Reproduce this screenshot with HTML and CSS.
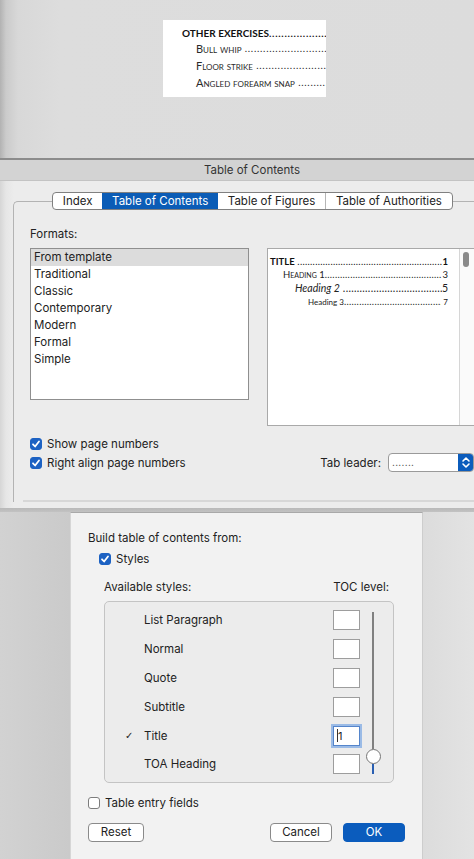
FILE: index.html
```html
<!DOCTYPE html>
<html>
<head>
<meta charset="utf-8">
<link rel="stylesheet" href="styles.css">
</head>
<body>
<section class="doc">
  <div class="card">
    <div class="cl top"><span class="nm-b">OTHER EXERCISES</span><span class="dots">......................................................</span></div>
    <div class="cl"><span class="nm">Bull whip</span><span class="dots">&nbsp;......................................................</span></div>
    <div class="cl"><span class="nm">Floor strike</span><span class="dots">&nbsp;......................................................</span></div>
    <div class="cl"><span class="nm">Angled forearm snap</span><span class="dots">&nbsp;......................................................</span></div>
  </div>
</section>

<section class="dlg">
  <div class="titlebar">Table of Contents</div>
  <div class="dbody">
    <div class="group">
      <div class="tabs">
        <span class="tab">Index</span>
        <span class="tab sel">Table of Contents</span>
        <span class="tab">Table of Figures</span>
        <span class="tab">Table of Authorities</span>
      </div>
      <div class="gcontent">
        <div class="lbl formats">Formats:</div>
        <div class="fmt-row">
          <ul class="list">
            <li class="sel">From template</li>
            <li>Traditional</li>
            <li>Classic</li>
            <li>Contemporary</li>
            <li>Modern</li>
            <li>Formal</li>
            <li>Simple</li>
          </ul>
          <div class="preview">
            <div class="pv">
              <div class="pl p0"><span>TITLE</span><span class="pd">&nbsp;....................................................................</span><span>1</span></div>
              <div class="pl p1"><span class="sc">Heading 1</span><span class="pd">....................................................................</span><span>3</span></div>
              <div class="pl p2"><span>Heading 2</span><span class="pd">&nbsp;....................................................................</span><span>5</span></div>
              <div class="pl p3"><span>Heading 3</span><span class="pd">....................................................................</span><span>&nbsp;7</span></div>
            </div>
            <div class="scroll"><div class="thumb"></div></div>
          </div>
        </div>
        <div class="opt opt1">
          <span class="cb on"><svg viewBox="0 0 12 12" width="12" height="12"><path d="M3 6.3 L5.1 8.5 L9 3.5" fill="none" stroke="#fff" stroke-width="1.8" stroke-linecap="round" stroke-linejoin="round"/></svg></span>
          <span>Show page numbers</span>
        </div>
        <div class="opt opt2">
          <div class="optl">
            <span class="cb on"><svg viewBox="0 0 12 12" width="12" height="12"><path d="M3 6.3 L5.1 8.5 L9 3.5" fill="none" stroke="#fff" stroke-width="1.8" stroke-linecap="round" stroke-linejoin="round"/></svg></span>
            <span>Right align page numbers</span>
          </div>
          <div class="leader">
            <span>Tab leader:</span>
            <div class="select">
              <span class="sv">.......</span>
              <span class="step"><svg viewBox="0 0 16 19" width="16" height="19"><path d="M5 8 L8 5 L11 8 M5 11 L8 14 L11 11" fill="none" stroke="#fff" stroke-width="1.6" stroke-linecap="round" stroke-linejoin="round"/></svg></span>
            </div>
          </div>
        </div>
      </div>
      <div class="sep"></div>
    </div>
  </div>
</section>

<section class="lower">
  <div class="panel">
    <div class="lbl build">Build table of contents from:</div>
    <div class="opt styles-cb">
      <span class="cb on"><svg viewBox="0 0 12 12" width="12" height="12"><path d="M3 6.3 L5.1 8.5 L9 3.5" fill="none" stroke="#fff" stroke-width="1.8" stroke-linecap="round" stroke-linejoin="round"/></svg></span>
      <span>Styles</span>
    </div>
    <div class="styles-area">
      <div class="avail"><span>Available styles:</span><span>TOC level:</span></div>
      <div class="stylebox">
        <div class="rows">
          <div class="row"><span class="ck"></span><span class="sn">List Paragraph</span><span class="lv"></span></div>
          <div class="row"><span class="ck"></span><span class="sn">Normal</span><span class="lv"></span></div>
          <div class="row"><span class="ck"></span><span class="sn">Quote</span><span class="lv"></span></div>
          <div class="row"><span class="ck"></span><span class="sn">Subtitle</span><span class="lv"></span></div>
          <div class="row"><span class="ck">✓</span><span class="sn">Title</span><span class="lv focus"><span class="caret"></span>1</span></div>
          <div class="row"><span class="ck"></span><span class="sn">TOA Heading</span><span class="lv"></span></div>
        </div>
        <div class="slider">
          <div class="track"></div>
          <div class="knob"></div>
          <div class="fill"></div>
        </div>
      </div>
    </div>
    <div class="opt entry">
      <span class="cb"></span>
      <span>Table entry fields</span>
    </div>
    <div class="buttons">
      <span class="btn reset">Reset</span>
      <span class="btn cancel">Cancel</span>
      <span class="btn ok">OK</span>
    </div>
  </div>
</section>
</body>
</html>
```

FILE: styles.css
```css
* { box-sizing: border-box; margin: 0; padding: 0; }
html, body { width: 474px; height: 859px; overflow: hidden; }
body {
  font-family: Inter, "Liberation Sans", sans-serif;
  font-size: 11.5px;
  color: #222;
  background: #dcdcdc;
}

/* ---------- document snippet ---------- */
.doc {
  height: 158px;
  padding-top: 20px;
  background: linear-gradient(to right, #b2b2b2 0, #cbcbcb 6px, #d8d8d8 18px, #dddddd 60px, #dcdcdc 100%);
}
.card {
  margin-left: 163px;
  width: 163px;
  height: 77px;
  background: #fff;
  padding-top: 6px;
  font-family: Lato, "Open Sans", sans-serif;
  font-size: 10px;
  color: #2a2a2a;
  overflow: hidden;
}
.cl {
  display: flex;
  white-space: nowrap;
  height: 17px;
  line-height: 17px;
  padding-left: 33px;
}
.cl.top {
  height: 14px;
  line-height: 14px;
  padding-left: 19px;
  font-weight: 700;
  color: #111;
}
.nm { font-variant: small-caps; font-size: 11px; }
.dots { flex: 1; overflow: hidden; letter-spacing: 0.7px; }

/* ---------- dialog ---------- */
.dlg { border-top: 2px solid #8c8c8c; }
.titlebar {
  height: 21px;
  line-height: 20px;
  background: #d3d3d3;
  border-bottom: 1px solid #c3c3c3;
  text-align: center;
  padding-left: 30px;
  color: #333;
}
.dbody {
  height: 327px;
  overflow: hidden;
  padding-top: 20px;
  background: linear-gradient(to right, #d6d6d6 0, #e6e6e6 6px, #ececec 14px);
}
.group {
  margin-left: 13px;
  width: 480px;
  border-top: 1px solid #b3b3b3;
  border-left: 1px solid #b3b3b3;
  border-top-left-radius: 5px;
}
.tabs {
  display: flex;
  width: max-content;
  margin-top: -10px;
  margin-left: 38px;
  height: 18px;
  border: 1px solid #808080;
  border-radius: 4px;
  background: #fff;
  overflow: hidden;
}
.tab {
  line-height: 16px;
  padding: 0 9.8px;
  color: #222;
  border-left: 1px solid #b5b5b5;
}
.tab:first-child { border-left: none; }
.tab.sel { background: #0b5cb6; color: #fff; border-left: none; }
.tab.sel + .tab { border-left: none; }

.gcontent { padding-left: 16px; width: 460px; }
.lbl { line-height: 14px; height: 14px; }
.formats { margin-top: 17px; }
.fmt-row {
  margin-top: 7px;
  display: flex;
  align-items: flex-start;
  gap: 18px;
}
.list {
  list-style: none;
  flex: none;
  width: 219px;
  height: 152px;
  background: #fff;
  border: 1px solid #8f8f8f;
}
.list li { height: 17px; line-height: 17px; padding-left: 3px; }
.list li.sel { background: #dcdcdc; }

.preview {
  flex: none;
  width: 209px;
  height: 178px;
  background: #fff;
  border: 1px solid #a9a9a9;
  display: flex;
}
.pv {
  width: 191px;
  padding: 6px 11px 0 2px;
  font-family: Lato, "Open Sans", sans-serif;
  color: #222;
}
.pl { display: flex; white-space: nowrap; }
.pd { flex: 1; overflow: hidden; letter-spacing: 0.3px; }
.p0 { font-weight: 700; font-size: 9.5px; height: 13px; line-height: 13px; color: #111; }
.p0 .pd { font-weight: 400; }
.p1 { font-size: 9.5px; height: 13px; line-height: 13px; padding-left: 13px; }
.p1 .sc { font-variant: small-caps; }
.p2 { font-size: 10.5px; height: 14px; line-height: 14px; padding-left: 25px; }
.p2 span:first-child { font-style: italic; }
.p3 { font-size: 8px; height: 14px; line-height: 14px; padding-left: 38px; }
.p3 .pd { font-size: 9.5px; }
.scroll {
  width: 16px;
  border-left: 1px solid #d6d6d6;
  background: #fafafa;
  padding: 3px 0 0 3px;
}
.thumb { width: 6px; height: 15px; border-radius: 3px; background: #8a8a8a; }

.opt {
  display: flex;
  align-items: center;
  gap: 5px;
  height: 19px;
}
.opt1 { margin-top: 8px; }
.opt2 { justify-content: space-between; width: 444px; }
.optl { display: flex; align-items: center; gap: 5px; }
.cb {
  width: 12px;
  height: 12px;
  border-radius: 3px;
  border: 1px solid #8a8a8a;
  background: #fff;
  display: flex;
  flex: none;
}
.cb.on { background: #1d62c3; border-color: #1d62c3; }
.cb svg { margin: -1px; }
.leader { display: flex; align-items: center; gap: 7px; }
.select {
  width: 86px;
  height: 19px;
  border: 1px solid #9a9a9a;
  border-radius: 4px;
  background: #fff;
  display: flex;
  overflow: hidden;
}
.sv { flex: 1; padding-left: 3px; line-height: 17px; font-size: 10px; letter-spacing: 0.3px; color: #444; }
.step { width: 16px; height: 19px; margin: -1px -1px 0 0; background: #0b5cbc; display: block; }
.step svg { display: block; }
.sep { margin: 28px 0 0 9px; height: 2px; background: #d7d7d7; }

/* ---------- lower panel ---------- */
.lower {
  height: 351px;
  padding-top: 4px;
  background:
    linear-gradient(to bottom, #b9b9b9 0, #c2c2c2 4px, rgba(0,0,0,0) 4px),
    linear-gradient(to right, #d2d2d2 0, #cacaca 70px, #dcdcdc 423px, #e3e3e3 474px);
}
.panel {
  margin-left: 70px;
  width: 353px;
  height: 347px;
  background: #f2f2f2;
  border-top: 1px solid #a9a9a9;
  border-left: 1px solid #d6d6d6;
  border-right: 1px solid #cdcdcd;
  padding: 18px 17px 0 17px;
}
.styles-cb { margin-top: 7px; height: 14px; padding-left: 11px; }
.styles-area { margin-left: 16px; width: 290px; }
.avail {
  margin-top: 14px;
  display: flex;
  justify-content: space-between;
  line-height: 14px;
  padding-right: 5px;
}
.stylebox {
  margin-top: 7px;
  height: 182px;
  border: 1px solid #c4c4c4;
  border-radius: 5px;
  background: #ececec;
  display: flex;
}
.rows { width: 261px; padding-top: 4px; }
.row {
  height: 28.8px;
  display: flex;
  align-items: center;
  padding: 0 6px 0 20px;
}
.ck { width: 19px; font-family: "DejaVu Sans", sans-serif; font-size: 10px; color: #222; }
.sn { flex: 1; }
.lv {
  width: 27px;
  height: 20px;
  border: 1px solid #9d9d9d;
  background: #fff;
  display: flex;
  align-items: center;
  font-size: 11px;
  padding-left: 3px;
}
.lv.focus {
  border-color: #5585cb;
  box-shadow: 0 0 0 2px #9bbbe6;
}
.caret { width: 1px; height: 13px; background: #333; }
.slider {
  width: 14px;
  padding-top: 10px;
  display: flex;
  flex-direction: column;
  align-items: center;
}
.track { width: 2px; height: 137px; background: #808080; }
.knob {
  width: 15px;
  height: 15px;
  border-radius: 50%;
  border: 1.5px solid #767676;
  background: #fff;
  flex: none;
}
.fill { width: 2px; height: 10px; background: #2a5fb2; }
.entry { margin-top: 13px; height: 14px; }
.entry .cb { border-color: #7d7d7d; }
.buttons { margin-top: 13px; display: flex; }
.btn {
  height: 19px;
  line-height: 17px;
  border: 1px solid #8a8a8a;
  border-radius: 4px;
  background: #fff;
  text-align: center;
  color: #222;
}
.reset { width: 56px; }
.cancel { width: 62px; margin-left: auto; }
.ok { width: 62px; margin-left: 11px; background: #0b5cbd; border-color: #0b5cbd; color: #fff; }
```
